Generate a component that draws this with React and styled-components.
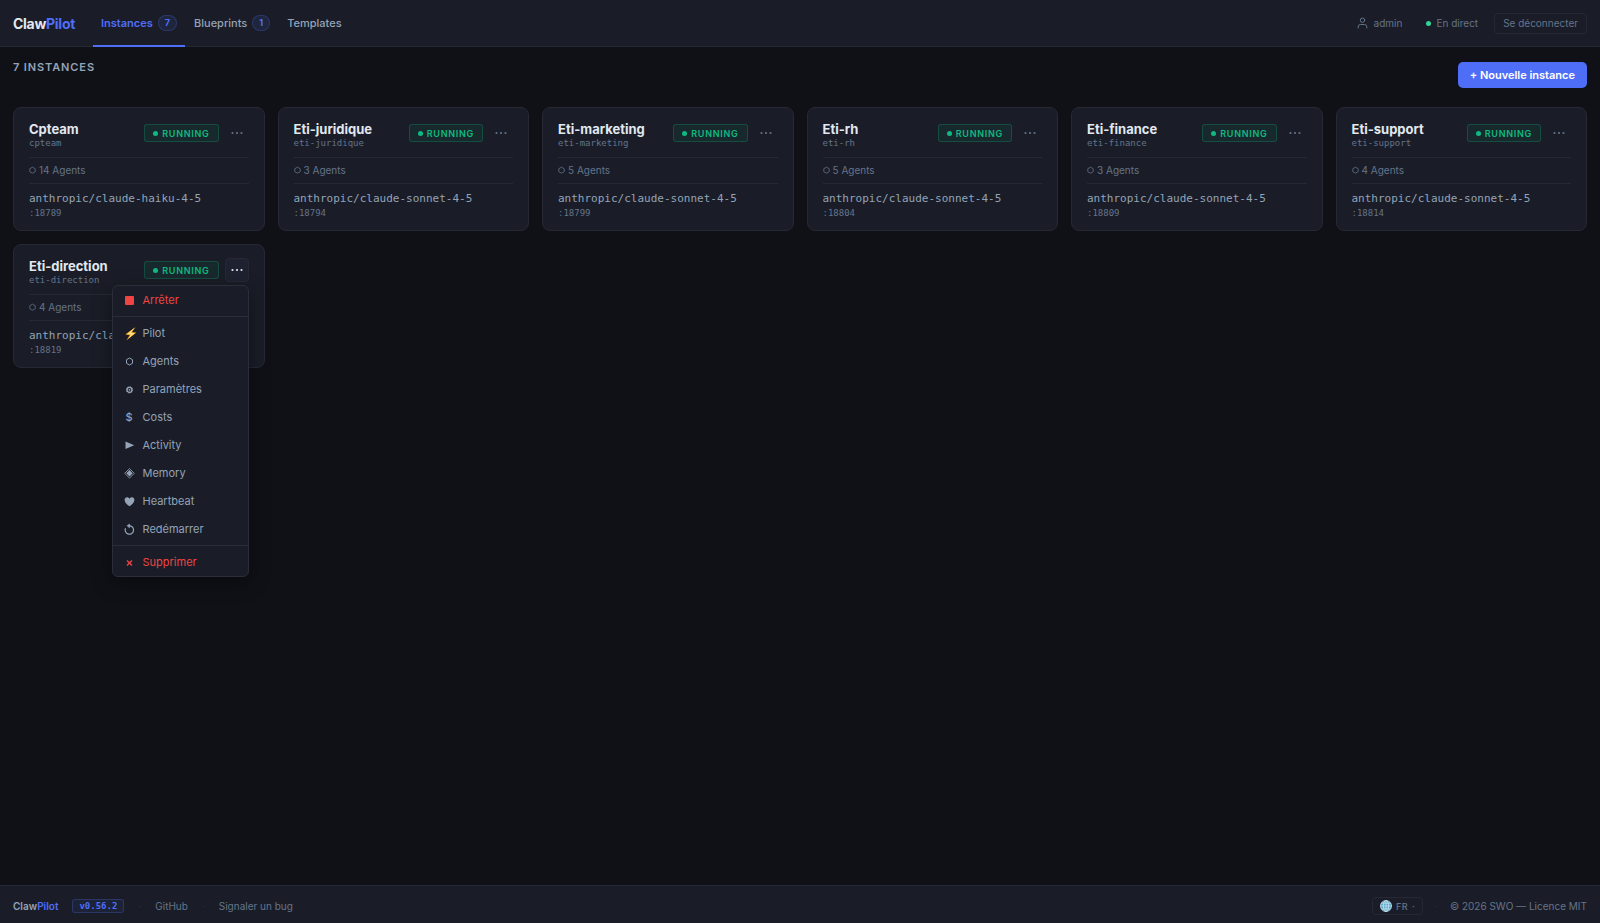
import React, { useState } from 'react'
import styled, { createGlobalStyle, css } from 'styled-components'

const sans = `Inter, "Liberation Sans", sans-serif`
const mono = `"DejaVu Sans Mono", "Liberation Mono", monospace`

const GlobalStyle = createGlobalStyle`
  * { box-sizing: border-box; }
  body {
    margin: 0;
    background: #0f1117;
    color: #e2e8f0;
    font-family: ${sans};
    font-size: 11px;
  }
  button { font-family: inherit; cursor: pointer; }
  a { color: inherit; text-decoration: none; }
`

const Page = styled.div`
  min-height: 100vh;
  display: flex;
  flex-direction: column;
`

const TopBar = styled.header`
  height: 47px;
  padding: 0 13px;
  display: flex;
  align-items: stretch;
  justify-content: space-between;
  background: #1a1d27;
  border-bottom: 1px solid #262935;
`

const Side = styled.div`
  display: flex;
  align-items: center;
  gap: ${(p) => p.$gap || 0}px;
`

const Brand = styled.a`
  font-size: ${(p) => (p.$small ? 10 : 14)}px;
  font-weight: ${(p) => (p.$small ? 600 : 700)};
  letter-spacing: ${(p) => (p.$small ? 'normal' : '-0.02em')};
  color: ${(p) => (p.$small ? '#94a3b8' : '#e2e8f0')};

  span { color: #4f6ef7; }
`

const Tabs = styled.nav`
  align-self: stretch;
  display: flex;
  gap: 1px;
  margin-left: 18px;
  margin-bottom: -1px;
`

const Tab = styled.a`
  display: flex;
  align-items: center;
  gap: 5px;
  padding: 0 8px;
  font-size: 11px;
  font-weight: ${(p) => (p.$active ? 600 : 500)};
  color: ${(p) => (p.$active ? '#4f6ef7' : '#94a3b8')};
  border-bottom: 2px solid ${(p) => (p.$active ? '#4f6ef7' : 'transparent')};
`

const Count = styled.span`
  padding: 0 6px;
  line-height: 14px;
  font-size: 9px;
  font-weight: 700;
  color: #4f6ef7;
  background: rgba(79, 110, 247, 0.1);
  border: 1px solid rgba(79, 110, 247, 0.25);
  border-radius: 10px;
`

const Status = styled.span`
  display: flex;
  align-items: center;
  gap: ${(p) => p.$gap}px;
  font-size: 10px;
  color: #64748b;
`

const Dot = styled.i`
  width: 5px;
  height: 5px;
  border-radius: 50%;
  background: ${(p) => p.$color};
`

const LogoutButton = styled.button`
  height: 21px;
  margin-left: -8px;
  padding: 0 8px;
  font-size: 10px;
  color: #64748b;
  background: transparent;
  border: 1px solid #262935;
  border-radius: 4px;
`

const Main = styled.main`
  flex: 1;
  padding: 15px 13px;
`

const MainHead = styled.div`
  display: flex;
  align-items: flex-start;
  justify-content: space-between;
  margin-bottom: 19px;
`

const Heading = styled.h1`
  margin: 0;
  font-size: 11px;
  line-height: 11px;
  font-weight: 600;
  letter-spacing: 0.08em;
  text-transform: uppercase;
  color: #94a3b8;
`

const NewButton = styled.button`
  height: 26px;
  padding: 0 12px;
  font-size: 11px;
  font-weight: 600;
  color: #fff;
  background: #4f6ef7;
  border: 0;
  border-radius: 5px;
`

const Grid = styled.div`
  display: grid;
  grid-template-columns: repeat(auto-fill, minmax(240px, 1fr));
  gap: 13px;
`

const Card = styled.article`
  padding: 13px 15px 11px;
  background: #1a1d27;
  border: 1px solid #262935;
  border-radius: 8px;
`

const CardHead = styled.div`
  display: flex;
  align-items: flex-start;
  justify-content: space-between;
  margin-bottom: 8px;
`

const Name = styled.h2`
  margin: 0;
  font-size: 13px;
  line-height: 16px;
  font-weight: 700;
`

const Small = styled.div`
  font-family: ${mono};
  font-size: 9px;
  line-height: 12px;
  color: #64748b;
`

const Actions = styled.div`
  display: flex;
  align-items: center;
  gap: 6px;
`

const Badge = styled.span`
  display: flex;
  align-items: center;
  gap: 4px;
  height: 18px;
  padding: 0 8px;
  font-size: 9px;
  font-weight: 600;
  letter-spacing: 0.08em;
  color: #10b981;
  background: rgba(16, 185, 129, 0.08);
  border: 1px solid rgba(16, 185, 129, 0.25);
  border-radius: 3px;
`

const MenuAnchor = styled.div`
  position: relative;
`

const MoreButton = styled.button`
  display: flex;
  align-items: center;
  justify-content: center;
  width: 24px;
  height: 24px;
  padding: 0;
  color: #64748b;
  background: transparent;
  border: 1px solid transparent;
  border-radius: 4px;

  ${(p) => p.$open && css`
    color: #e2e8f0;
    background: #1e2130;
    border-color: #262935;
  `}
`

const AgentsRow = styled.div`
  display: flex;
  align-items: center;
  gap: 3px;
  height: 27px;
  margin-bottom: 7px;
  padding-bottom: 2px;
  font-size: 10px;
  color: #64748b;
  border-top: 1px solid #262935;
  border-bottom: 1px solid #262935;
`

const Model = styled.div`
  font-family: ${mono};
  font-size: 11px;
  line-height: 16px;
  color: #94a3b8;
  overflow: hidden;
  text-overflow: ellipsis;
  white-space: nowrap;
`

const Menu = styled.div`
  position: absolute;
  top: 27px;
  right: 0;
  z-index: 10;
  width: 137px;
  background: #1a1d27;
  border: 1px solid #2a2d3a;
  border-radius: 6px;
  box-shadow: 0 6px 20px rgba(0, 0, 0, 0.4);
`

const MenuItem = styled.button`
  display: flex;
  align-items: center;
  gap: 7px;
  width: 100%;
  height: 28px;
  padding: 0 10px;
  font-size: 11px;
  font-weight: 400;
  color: ${(p) => (p.$danger ? '#ef4444' : '#94a3b8')};
  background: transparent;
  border: 0;
`

const Divider = styled.hr`
  margin: 2px 0;
  border: 0;
  border-top: 1px solid #2a2d3a;
`

const Footer = styled.footer`
  display: flex;
  justify-content: space-between;
  height: 38px;
  padding: 3px 13px 0;
  font-size: 10px;
  color: #64748b;
  background: #1a1d27;
  border-top: 1px solid #262935;
`

const Version = styled.a`
  padding: 0 6px;
  line-height: 12px;
  font-family: ${mono};
  font-size: 9px;
  font-weight: 700;
  color: #4f6ef7;
  background: rgba(79, 110, 247, 0.08);
  border: 1px solid rgba(79, 110, 247, 0.25);
  border-radius: 3px;
`

const Separator = styled.span`
  color: #2a2d3a;
`

const LangButton = styled.button`
  display: flex;
  align-items: center;
  gap: 4px;
  height: 18px;
  padding: 0 7px;
  font-size: 9px;
  font-weight: 500;
  letter-spacing: 0.04em;
  color: #64748b;
  background: transparent;
  border: 1px solid #262935;
  border-radius: 4px;
`

const instances = [
  { name: 'Cpteam', agents: 14, model: 'anthropic/claude-haiku-4-5', port: 18789 },
  { name: 'Eti-juridique', agents: 3, model: 'anthropic/claude-sonnet-4-5', port: 18794 },
  { name: 'Eti-marketing', agents: 5, model: 'anthropic/claude-sonnet-4-5', port: 18799 },
  { name: 'Eti-rh', agents: 5, model: 'anthropic/claude-sonnet-4-5', port: 18804 },
  { name: 'Eti-finance', agents: 3, model: 'anthropic/claude-sonnet-4-5', port: 18809 },
  { name: 'Eti-support', agents: 4, model: 'anthropic/claude-sonnet-4-5', port: 18814 },
  { name: 'Eti-direction', agents: 4, model: 'anthropic/claude-sonnet-4-5', port: 18819 },
]

const menuItems = [
  { icon: 'bolt', label: 'Pilot' },
  { icon: 'hexagon', label: 'Agents' },
  { icon: 'gear', label: 'Paramètres' },
  { icon: 'dollar', label: 'Costs' },
  { icon: 'play', label: 'Activity' },
  { icon: 'diamond', label: 'Memory' },
  { icon: 'heart', label: 'Heartbeat' },
  { icon: 'restart', label: 'Redémarrer' },
]

const shapes = {
  stop: <rect x="2" y="2" width="9" height="9" rx="1" fill="currentColor" />,
  bolt: (
    <>
      <path d="M12.500 0 2.300 7.600l4.400.6L3.200 13.600 13.400 5.600l-4.500-.4z" fill="#f59e0b" />
      <path d="M11.800.700 3.900 7.100l4 .4-2.900 4.600 7.100-6-4.300-.3z" fill="#ffdf80" />
    </>
  ),
  hexagon: <path d="M6.500 3 9.500 4.700v3.600L6.500 10 3.500 8.300V4.700z" fill="none" stroke="currentColor" strokeWidth="1" />,
  gear: (
    <>
      <circle cx="6.500" cy="6.800" r="2.500" fill="none" stroke="currentColor" strokeWidth="1.300" />
      <circle cx="6.500" cy="6.800" r="3.200" fill="none" stroke="currentColor" strokeWidth="0.800" strokeDasharray="1.200 1.300" />
      <circle cx="6.500" cy="6.800" r="0.900" fill="currentColor" />
    </>
  ),
  play: <path d="M2.500 2.600 11.200 6.300 2.500 10z" fill="currentColor" />,
  diamond: (
    <>
      <path d="M6.500 1.500 11.300 6.300 6.500 11.100 1.700 6.300z" fill="none" stroke="currentColor" strokeWidth="0.800" />
      <path d="M6.500 3.100 9.700 6.300 6.500 9.500 3.300 6.300z" fill="currentColor" />
    </>
  ),
  heart: <path d="M6.500 11.300C4.100 9.600 1.600 7.600 1.600 5 1.600 3.300 2.700 2.300 4.100 2.300c1.100 0 2 .6 2.400 1.500.4-.9 1.300-1.500 2.400-1.500 1.400 0 2.500 1 2.500 2.700 0 2.600-2.500 4.600-4.900 6.300z" fill="currentColor" />,
  restart: (
    <>
      <path d="M2.500 5.300A4.200 4.200 0 1 0 6 2.800h2" fill="none" stroke="currentColor" strokeWidth="1.200" />
      <path d="M6.800.400v4.800L3.600 2.800z" fill="currentColor" />
    </>
  ),
  cross: <path d="M4 4.400 9 9.400M9 4.400 4 9.400" stroke="currentColor" strokeWidth="1.400" />,
}

const Glyph = styled.span`
  width: 13px;
  font-size: 11px;
  font-weight: 500;
  text-align: center;
`

function Icon({ name }) {
  if (name === 'dollar') return <Glyph>$</Glyph>
  return (
    <svg width="13" height="13" viewBox="0 0 13 13" overflow="visible" aria-hidden="true">
      {shapes[name]}
    </svg>
  )
}

function InstanceMenu() {
  return (
    <Menu role="menu">
      <MenuItem role="menuitem" $danger><Icon name="stop" />Arrêter</MenuItem>
      <Divider />
      {menuItems.map((item) => (
        <MenuItem key={item.label} role="menuitem"><Icon name={item.icon} />{item.label}</MenuItem>
      ))}
      <Divider />
      <MenuItem role="menuitem" $danger><Icon name="cross" />Supprimer</MenuItem>
    </Menu>
  )
}

function InstanceCard({ instance, open, onToggle }) {
  return (
    <Card>
      <CardHead>
        <div>
          <Name>{instance.name}</Name>
          <Small>{instance.name.toLowerCase()}</Small>
        </div>
        <Actions>
          <Badge><Dot $color="#10b981" />RUNNING</Badge>
          <MenuAnchor>
            <MoreButton $open={open} onClick={onToggle} aria-label="Actions" aria-expanded={open}>
              <svg width="12" height="4" viewBox="0 0 12 4" fill="currentColor" aria-hidden="true">
                <circle cx="1.500" cy="2" r="1.100" />
                <circle cx="6" cy="2" r="1.100" />
                <circle cx="10.500" cy="2" r="1.100" />
              </svg>
            </MoreButton>
            {open && <InstanceMenu />}
          </MenuAnchor>
        </Actions>
      </CardHead>
      <AgentsRow>
        <svg width="7" height="8" viewBox="0 0 7 8" fill="none" stroke="currentColor" strokeWidth="0.800" aria-hidden="true">
          <path d="M3.500 1.200 6.200 2.700v3L3.500 7.200.800 5.700v-3z" />
        </svg>
        {instance.agents} Agents
      </AgentsRow>
      <Model>{instance.model}</Model>
      <Small>:{instance.port}</Small>
    </Card>
  )
}

export default function App() {
  const [openMenu, setOpenMenu] = useState('Eti-direction')

  const toggleMenu = (name) => setOpenMenu(openMenu === name ? null : name)

  return (
    <>
      <GlobalStyle />
      <Page>
        <TopBar>
          <Side>
            <Brand href="#">Claw<span>Pilot</span></Brand>
            <Tabs>
              <Tab href="#instances" $active>Instances <Count>7</Count></Tab>
              <Tab href="#blueprints">Blueprints <Count>1</Count></Tab>
              <Tab href="#templates">Templates</Tab>
            </Tabs>
          </Side>
          <Side $gap={24}>
            <Status $gap={6}>
              <svg width="11" height="12" viewBox="0 0 11 12" fill="none" stroke="currentColor" strokeWidth="1" strokeLinecap="round" aria-hidden="true">
                <circle cx="5.500" cy="3.200" r="2.200" />
                <path d="M1.200 11V9.800a2.300 2.300 0 0 1 2.300-2.300h4a2.300 2.300 0 0 1 2.300 2.300V11" />
              </svg>
              admin
            </Status>
            <Status $gap={5}><Dot $color="#34d399" />En direct</Status>
            <LogoutButton>Se déconnecter</LogoutButton>
          </Side>
        </TopBar>

        <Main>
          <MainHead>
            <Heading>7 instances</Heading>
            <NewButton>+ Nouvelle instance</NewButton>
          </MainHead>
          <Grid>
            {instances.map((instance) => (
              <InstanceCard
                key={instance.name}
                instance={instance}
                open={openMenu === instance.name}
                onToggle={() => toggleMenu(instance.name)}
              />
            ))}
          </Grid>
        </Main>

        <Footer>
          <Side $gap={14}>
            <Brand href="#" $small>Claw<span>Pilot</span></Brand>
            <Version href="#version">v0.56.2</Version>
            <Separator>·</Separator>
            <a href="#github">GitHub</a>
            <Separator>·</Separator>
            <a href="#bug">Signaler un bug</a>
          </Side>
          <Side $gap={12}>
            <LangButton>
              <svg width="12" height="12" viewBox="0 0 12 12" fill="none" stroke="#d9f1f8" strokeWidth="0.600" aria-hidden="true">
                <circle cx="6" cy="6" r="5.600" fill="#5fa8c8" />
                <ellipse cx="6" cy="6" rx="2.600" ry="5.600" />
                <path d="M6 .4v11.200M.4 6h11.200M1.300 3.200h9.400M1.300 8.800h9.400" />
              </svg>
              FR <span>·</span>
            </LangButton>
            <Separator>·</Separator>
            <span>© 2026 SWO — Licence MIT</span>
          </Side>
        </Footer>
      </Page>
    </>
  )
}
